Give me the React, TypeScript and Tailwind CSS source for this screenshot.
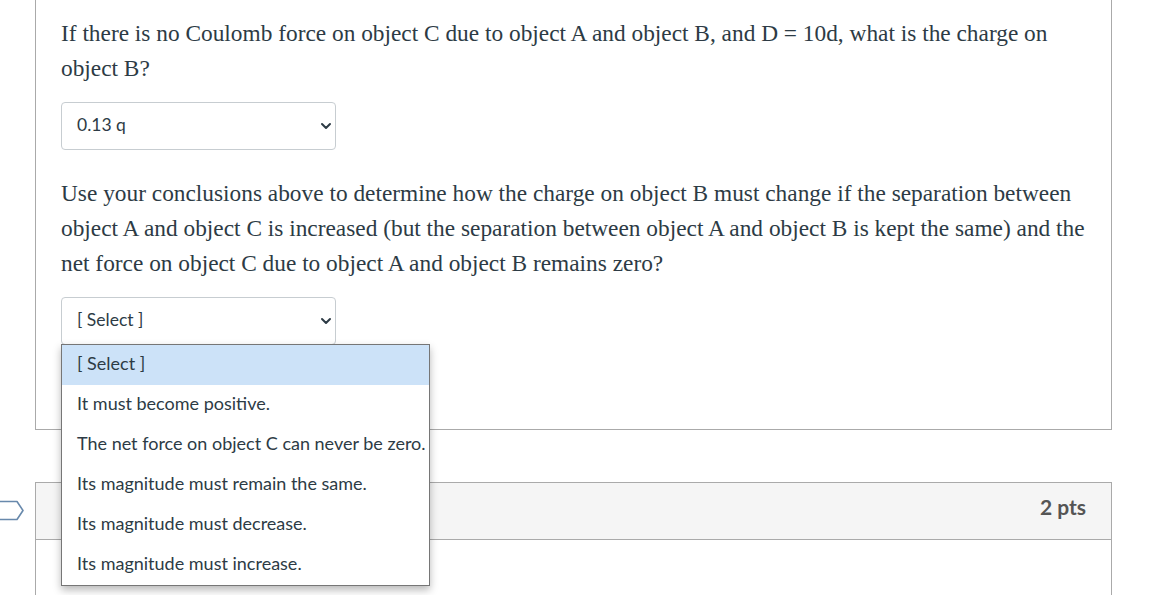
import React from 'react';

const options = [
  '[ Select ]',
  'It must become positive.',
  'The net force on object C can never be zero.',
  'Its magnitude must remain the same.',
  'Its magnitude must decrease.',
  'Its magnitude must increase.',
];

const Chevron: React.FC = () => (
  <svg width="12" height="8" viewBox="0 0 12 8" fill="none" stroke="#2d3b45" strokeWidth={2} strokeLinecap="round" strokeLinejoin="round">
    <path d="M2 2l4 4 4-4" />
  </svg>
);

const FakeSelect: React.FC<{ value: string; open?: boolean }> = ({ value, open }) => (
  <div className="relative w-[275px]">
    <div className="h-[48px] flex items-center justify-between pl-[15px] pr-[3px] border border-[#c7cdd1] rounded-[4px] bg-white text-[17.5px] text-[#2d3b45] font-['Lato','Liberation_Sans',sans-serif]">
      <span className="pb-[3px]">{value}</span>
      <Chevron />
    </div>
    {open && (
      <ul className="absolute left-0 top-[47px] w-[369px] border border-[#767676] bg-white shadow-[0_4px_8px_rgba(0,0,0,0.28)] z-10 font-['Lato','Liberation_Sans',sans-serif] text-[18px] text-[#2d3b45]">
        {options.map((o, i) => (
          <li key={o} className={`h-[40px] flex items-center pl-[15px] pb-[3px] whitespace-nowrap ${i === 0 ? 'bg-[#cce2f8]' : ''}`}>
            {o}
          </li>
        ))}
      </ul>
    )}
  </div>
);

const App: React.FC = () => {
  return (
    <div className="w-[1170px] h-[595px] overflow-hidden bg-white">
      <div className="pl-[35px] w-[1112px]">
        <div className="border-x border-b border-[#aaaaaa] pt-4 pl-[25px] pr-[25px] pb-[84px] font-['Liberation_Serif',serif] text-[23.35px] leading-[35px] text-[#2d3b45]">
          <p>If there is no Coulomb force on object C due to object A and object B, and D = 10d, what is the charge on object B?</p>
          <div className="mt-4">
            <FakeSelect value="0.13 q" />
          </div>
          <p className="mt-[26px]">
            Use your conclusions above to determine how the charge on object B must change if the separation between object A and object C is increased (but the separation between object A and object B is kept the same) and the net force on object C due to object A and object B remains zero?
          </p>
          <div className="mt-4">
            <FakeSelect value="[ Select ]" open />
          </div>
        </div>
      </div>
      <div className="flex mt-[52px]">
        <div className="w-[35px] pt-[18px]">
          <svg width="26" height="22" viewBox="0 0 26 22" fill="none" stroke="#6889ac" strokeWidth={1.6} strokeLinejoin="round">
            <path d="M-2 1.5H17L23 10.5L17 19.5H-2" />
          </svg>
        </div>
        <div className="w-[1077px] border border-[#aaaaaa]">
          <div className="h-[57px] bg-[#f5f5f5] border-b border-[#aaaaaa] flex items-center justify-end pr-[25px] pb-[8px] font-['Lato','Liberation_Sans',sans-serif] text-[21px] font-bold text-[#555555]">
            2 pts
          </div>
          <div className="h-[100px]" />
        </div>
      </div>
    </div>
  );
};

export default App;
